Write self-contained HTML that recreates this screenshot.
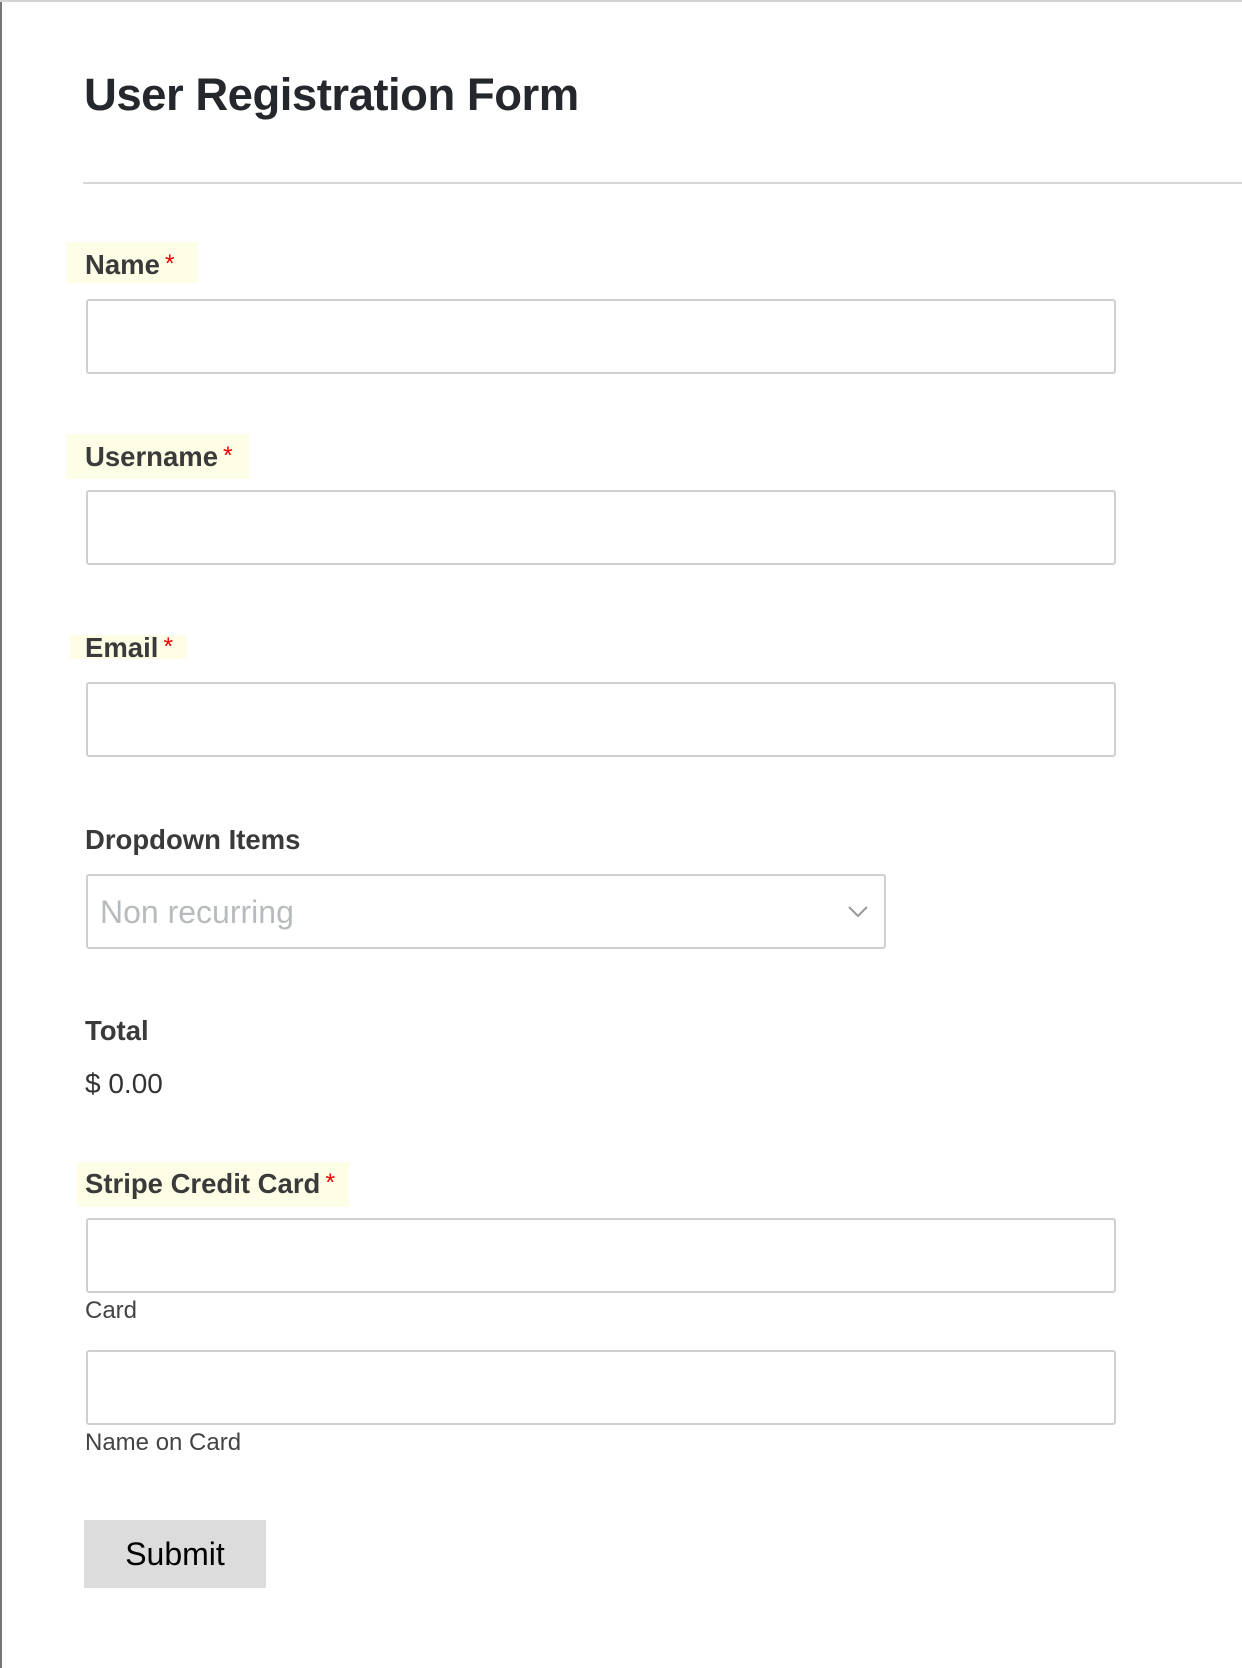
<!DOCTYPE html>
<html><head><meta charset="utf-8"><style>
html,body{margin:0;padding:0;width:1242px;height:1668px;background:#fff;overflow:hidden;position:relative;font-family:"Liberation Sans",sans-serif}
.a{position:absolute}
.lb{position:absolute;font-weight:bold;font-size:27.5px;color:#3a3a3a;line-height:30px;white-space:nowrap}
.hl{position:absolute;background:#fefde6}
.in{position:absolute;left:86px;width:1030px;border:2px solid #cfcfcf;border-radius:3px;box-sizing:border-box;height:75px}
.st{color:#e00;font-weight:normal;font-size:25px;vertical-align:2px;margin-left:5px}
.sm{position:absolute;left:85px;font-size:24px;color:#444;line-height:26px}
</style></head><body>
<div class="a" style="left:0;top:0;width:2px;height:1668px;background:#777"></div>
<div class="a" style="left:0;top:0;width:1242px;height:2px;background:#d4d4d4"></div>
<div class="a" style="left:84px;top:67px;font-size:45.5px;font-weight:bold;color:#24282c;line-height:56px;letter-spacing:-0.5px">User Registration Form</div>
<div class="a" style="left:83px;top:182px;width:1159px;height:2px;background:#d6d6d6"></div>

<div class="hl" style="left:66px;top:242px;width:132px;height:41px"></div>
<div class="lb" style="left:85px;top:249px">Name<span class="st">*</span></div>
<div class="in" style="top:299px"></div>

<div class="hl" style="left:66px;top:434px;width:183px;height:45px"></div>
<div class="lb" style="left:85px;top:441px">Username<span class="st">*</span></div>
<div class="in" style="top:490px"></div>

<div class="hl" style="left:70px;top:635px;width:117px;height:24px"></div>
<div class="lb" style="left:85px;top:632px">Email<span class="st">*</span></div>
<div class="in" style="top:682px"></div>

<div class="lb" style="left:85px;top:825px">Dropdown Items</div>
<div class="in" style="top:874px;width:800px"></div>
<div class="a" style="left:100px;top:894px;font-size:32px;color:#b8bbbe;line-height:36px">Non recurring</div>
<svg class="a" style="left:847px;top:905px" width="22" height="14" viewBox="0 0 22 14"><path d="M2 2 L11 11 L20 2" fill="none" stroke="#999" stroke-width="2"/></svg>

<div class="lb" style="left:85px;top:1016px">Total</div>
<div class="a" style="left:85px;top:1069px;font-size:28px;color:#333;line-height:30px">$ 0.00</div>

<div class="hl" style="left:77px;top:1162px;width:272px;height:45px"></div>
<div class="lb" style="left:85px;top:1168px">Stripe Credit Card<span class="st">*</span></div>
<div class="in" style="top:1218px"></div>
<div class="sm" style="top:1298px">Card</div>
<div class="in" style="top:1350px"></div>
<div class="sm" style="top:1430px">Name on Card</div>

<div class="a" style="left:84px;top:1520px;width:182px;height:68px;background:#dcdcdc;font-size:32px;color:#000;line-height:68px;text-align:center">Submit</div>
</body></html>
